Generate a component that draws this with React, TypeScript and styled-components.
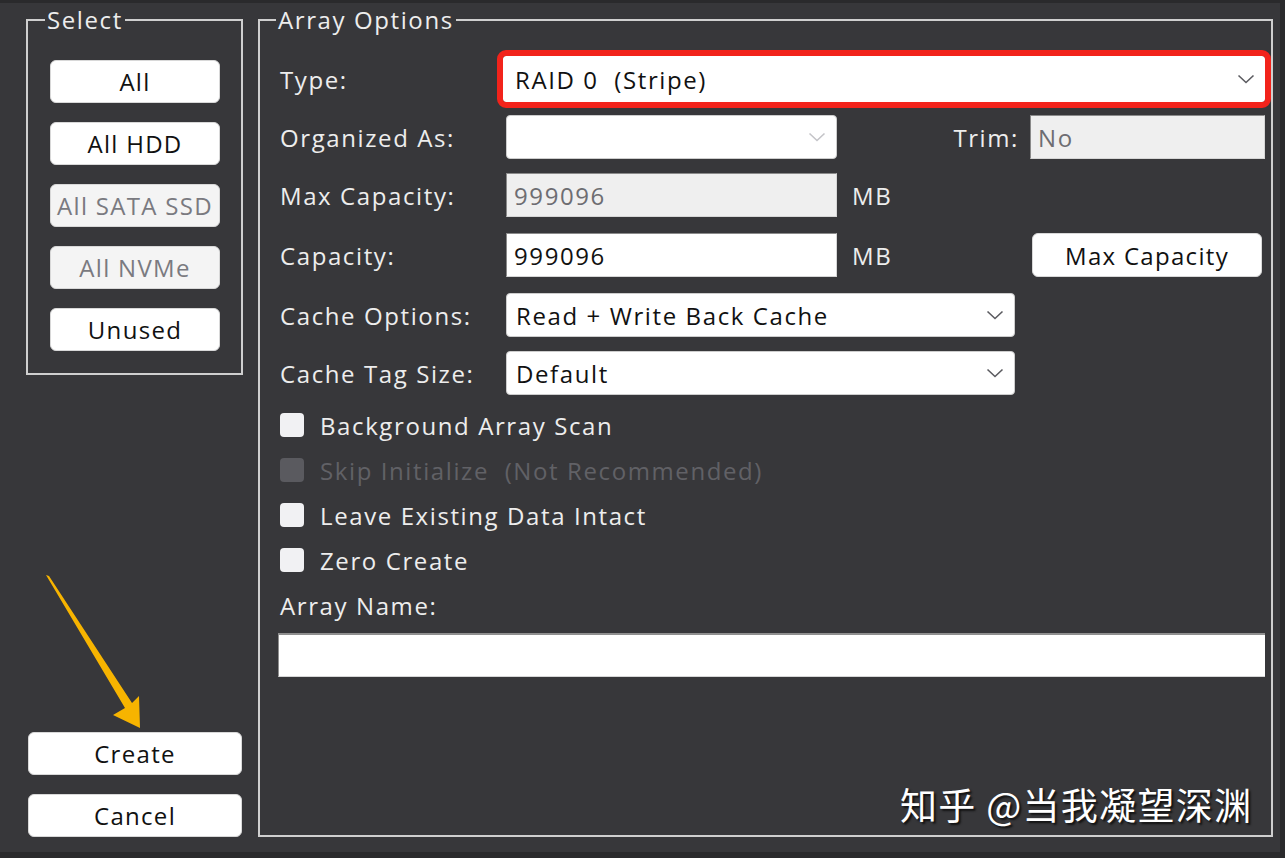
import { createGlobalStyle } from "styled-components";
import styled from "styled-components";

const GlobalStyle = createGlobalStyle`
  html, body {
    margin: 0;
    padding: 0;
    background: #2a2a2c;
  }
  * {
    box-sizing: border-box;
  }
`;

const Frame = styled.div`
  position: relative;
  width: 1285px;
  height: 858px;
  display: flex;
  gap: 15px;
  padding: 2px 7px 15px 26px;
  background: #37373a;
  border-top: 3px solid #2a2a2c;
  border-right: 5px solid #2a2a2c;
  border-bottom: 6px solid #2a2a2c;
  font-family: "Open Sans", "Noto Sans", sans-serif;
  font-size: 24px;
  letter-spacing: 1.6px;
  color: #ededed;
  overflow: hidden;
`;

const SideColumn = styled.div`
  width: 217px;
  display: flex;
  flex-direction: column;
`;

const GroupBox = styled.fieldset<{ $grow?: boolean }>`
  margin: 0;
  border: 2px solid #cfcfcf;
  min-width: 0;
  ${(p) => (p.$grow ? "flex: 1;" : "height: 370px;")}
  padding: ${(p) => (p.$grow ? "19px 6px 0 20px" : "25px 0 0 22px")};
  display: flex;
  flex-direction: column;
`;

const Legend = styled.legend<{ $shift: number }>`
  margin-left: ${(p) => p.$shift}px;
  padding: 0 2px;
  height: 30px;
  line-height: 30px;
  font-size: 24px;
  color: #ededed;
`;

const SideButtons = styled.div`
  display: flex;
  flex-direction: column;
  gap: 19px;
`;

const SideButton = styled.div<{ $disabled?: boolean; $wide?: boolean }>`
  width: ${(p) => (p.$wide ? "214px" : "170px")};
  height: 43px;
  margin-left: ${(p) => (p.$wide ? "2px" : "0")};
  border-radius: 6px;
  background: ${(p) => (p.$disabled ? "#f4f4f4" : "#ffffff")};
  color: ${(p) => (p.$disabled ? "#7a7a80" : "#111111")};
  border: 1px solid #d8d8d8;
  display: flex;
  align-items: center;
  justify-content: center;
  white-space: nowrap;
  letter-spacing: 1.3px;
`;

const BottomButtons = styled(SideButtons)`
  margin-top: auto;
`;

const Row = styled.div<{ $mt: number; $h?: number }>`
  display: flex;
  align-items: center;
  margin-top: ${(p) => p.$mt}px;
  height: ${(p) => p.$h ?? 44}px;
`;

const Label = styled.div`
  width: 226px;
  flex: none;
  white-space: nowrap;
`;

const Combo = styled.div<{ $width?: number; $disabled?: boolean; $highlight?: boolean }>`
  position: relative;
  width: ${(p) => (p.$width ? `${p.$width}px` : "auto")};
  ${(p) => (p.$width ? "" : "flex: 1;")}
  height: 100%;
  display: flex;
  align-items: center;
  justify-content: space-between;
  padding: 0 10px 0 ${(p) => (p.$highlight ? "12px" : "9px")};
  margin-left: ${(p) => (p.$highlight ? "-3px" : "0")};
  background: #ffffff;
  color: #111;
  border: 1px solid #cdcdcd;
  border-radius: 4px;
  white-space: nowrap;
  ${(p) =>
    p.$highlight
      ? "outline: 6px solid #f2231b; border-radius: 3px; border: none;"
      : ""}
`;

const TextBox = styled.div<{ $width: number; $readOnly?: boolean }>`
  width: ${(p) => p.$width}px;
  height: 100%;
  display: flex;
  align-items: center;
  padding-left: 7px;
  background: ${(p) => (p.$readOnly ? "#efefef" : "#ffffff")};
  color: ${(p) => (p.$readOnly ? "#6d6d72" : "#111")};
  border-top: 1px solid #8a8a8a;
  border-left: 1px solid #8a8a8a;
  border-right: 1px solid #d6d6d6;
  border-bottom: 1px solid #d6d6d6;
`;

const Unit = styled.div`
  margin-left: 15px;
`;

const TrimLabel = styled.div`
  margin-left: auto;
  margin-right: 11px;
`;

const ActionButton = styled(SideButton)`
  width: 230px;
  height: 44px;
  margin-left: auto;
  margin-right: 3px;
`;

const CheckRow = styled.div<{ $disabled?: boolean }>`
  display: flex;
  align-items: center;
  gap: 16px;
  height: 30px;
  margin-top: 15px;
  white-space: nowrap;
  color: ${(p) => (p.$disabled ? "#616166" : "#ededed")};
`;

const CheckBox = styled.div<{ $disabled?: boolean }>`
  width: 24px;
  height: 24px;
  flex: none;
  border-radius: 4px;
  background: ${(p) => (p.$disabled ? "#5a5a5f" : "#f1f1f3")};
`;

const NameInput = styled.div`
  height: 44px;
  margin-top: 13px;
  margin-left: -2px;
  background: #ffffff;
  border-top: 2px solid #8f8f8f;
  border-left: 1px solid #8f8f8f;
  border-bottom: 1px solid #d6d6d6;
`;

const Watermark = styled.div`
  position: absolute;
  left: 900px;
  top: 774px;
  font-family: "Noto Sans CJK SC", "Noto Sans", sans-serif;
  font-size: 37px;
  font-weight: 400;
  color: #ffffff;
  text-shadow: 2px 2px 2px #111;
  white-space: nowrap;
  letter-spacing: 1.3px;
`;

const Pointer = styled.svg`
  position: absolute;
  left: 0;
  top: 0;
  pointer-events: none;
`;

const Chevron = ({ light }: { light?: boolean }) => (
  <svg width="18" height="10" viewBox="0 0 18 10">
    <path
      d="M1.5 1.5 L9 8.5 L16.5 1.5"
      fill="none"
      stroke={light ? "#c4c4c8" : "#5b5b60"}
      strokeWidth="1.6"
    />
  </svg>
);

const selectButtons = [
  { label: "All" },
  { label: "All HDD" },
  { label: "All SATA SSD", disabled: true },
  { label: "All NVMe", disabled: true },
  { label: "Unused" },
];

const checks = [
  { label: "Background Array Scan" },
  { label: "Skip Initialize\u00a0 (Not Recommended)", disabled: true },
  { label: "Leave Existing Data Intact" },
  { label: "Zero Create" },
];

export default function App() {
  return (
    <>
      <GlobalStyle />
      <Frame>
        <SideColumn>
          <GroupBox>
            <Legend $shift={-5}>Select</Legend>
            <SideButtons>
              {selectButtons.map((b) => (
                <SideButton key={b.label} $disabled={b.disabled}>
                  {b.label}
                </SideButton>
              ))}
            </SideButtons>
          </GroupBox>
          <BottomButtons>
            <SideButton $wide>Create</SideButton>
            <SideButton $wide>Cancel</SideButton>
          </BottomButtons>
        </SideColumn>

        <GroupBox $grow>
          <Legend $shift={-4}>Array Options</Legend>
          <Row $mt={2} $h={46}>
            <Label>Type:</Label>
            <Combo $highlight>
              <span>RAID 0&nbsp; (Stripe)</span>
              <Chevron />
            </Combo>
          </Row>
          <Row $mt={13}>
            <Label>Organized As:</Label>
            <Combo $width={331}>
              <span />
              <Chevron light />
            </Combo>
            <TrimLabel>Trim:</TrimLabel>
            <TextBox $width={235} $readOnly>
              No
            </TextBox>
          </Row>
          <Row $mt={14}>
            <Label>Max Capacity:</Label>
            <TextBox $width={331} $readOnly>
              999096
            </TextBox>
            <Unit>MB</Unit>
          </Row>
          <Row $mt={16}>
            <Label>Capacity:</Label>
            <TextBox $width={331}>999096</TextBox>
            <Unit>MB</Unit>
            <ActionButton>Max Capacity</ActionButton>
          </Row>
          <Row $mt={16}>
            <Label>Cache Options:</Label>
            <Combo $width={509}>
              <span>Read + Write Back Cache</span>
              <Chevron />
            </Combo>
          </Row>
          <Row $mt={14}>
            <Label>Cache Tag Size:</Label>
            <Combo $width={509}>
              <span>Default</span>
              <Chevron />
            </Combo>
          </Row>
          {checks.map((c) => (
            <CheckRow key={c.label} $disabled={c.disabled}>
              <CheckBox $disabled={c.disabled} />
              <span>{c.label}</span>
            </CheckRow>
          ))}
          <Row $mt={15} $h={30}>
            <Label>Array Name:</Label>
          </Row>
          <NameInput />
        </GroupBox>

        <Pointer width="200" height="760" viewBox="0 0 200 760">
          <polygon
            points="46,572 49,573 132,700 139,693 140,725 113,712 125,705"
            fill="#f7b400"
          />
        </Pointer>
        <Watermark>知乎 @当我凝望深渊</Watermark>
      </Frame>
    </>
  );
}
